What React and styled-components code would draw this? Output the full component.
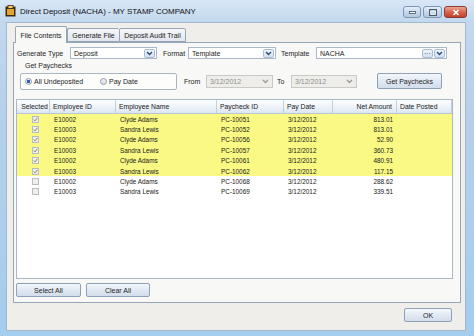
import React from 'react';
import styled, { createGlobalStyle } from 'styled-components';

const GlobalStyle = createGlobalStyle`
  html, body { margin: 0; padding: 0; overflow: hidden; background: #9fcbec; }
  body { font-family: "Liberation Sans", Arial, sans-serif; color: #1b1b1b; }
  * { box-sizing: border-box; }
`;

const rows = [
  { id: 'E10002', name: 'Clyde Adams', check: 'PC-10051', amount: '813.01', sel: true },
  { id: 'E10003', name: 'Sandra Lewis', check: 'PC-10052', amount: '813.01', sel: true },
  { id: 'E10002', name: 'Clyde Adams', check: 'PC-10056', amount: '52.90', sel: true },
  { id: 'E10003', name: 'Sandra Lewis', check: 'PC-10057', amount: '360.73', sel: true },
  { id: 'E10002', name: 'Clyde Adams', check: 'PC-10061', amount: '480.91', sel: true },
  { id: 'E10003', name: 'Sandra Lewis', check: 'PC-10062', amount: '117.15', sel: true },
  { id: 'E10002', name: 'Clyde Adams', check: 'PC-10068', amount: '288.62', sel: false },
  { id: 'E10003', name: 'Sandra Lewis', check: 'PC-10069', amount: '339.51', sel: false },
];

const columns = '33px 66px 101px 67px 49px 64px 55px';

// * Window frame
const Window = styled.div`
  width: 474px;
  height: 336px;
  display: flex;
  flex-direction: column;
  padding: 0 8px 5px 6px;
  background: linear-gradient(to bottom, #d9e7f6 0px, #c2d8ee 22px, #b5d0eb 120px, #a4cdee 100%);
`;

const TitleBar = styled.div`
  height: 22px;
  display: flex;
  align-items: center;
  margin-left: -1px;
`;

const Title = styled.div`
  flex: 1;
  font-size: 8px;
  color: #111;
  padding-left: 4px;
  padding-top: 1px;
  white-space: nowrap;
`;

const Controls = styled.div`
  display: flex;
  gap: 2px;
  align-self: flex-start;
  margin-top: 6px;
  margin-right: -1px;
`;

const CtrlButton = styled.div`
  width: ${p => p.$w}px;
  height: 12px;
  border-radius: 3px;
  border: 1px solid ${p => (p.$close ? '#8c3b2f' : '#7f96b2')};
  background: ${p =>
    p.$close
      ? 'linear-gradient(to bottom, #eaa797, #d5644d 50%, #c3412c)'
      : 'linear-gradient(to bottom, #e6eff9, #c8d9ec 50%, #b3c9e2)'};
  display: flex;
  align-items: center;
  justify-content: center;
`;

const Client = styled.div`
  flex: 1;
  display: flex;
  flex-direction: column;
  background: #efeeea;
  border: 1px solid #a3b8cd;
  padding: 3px 4px 0 6px;
`;

// * Tabs
const TabStrip = styled.div`
  display: flex;
  align-items: flex-end;
  height: 16px;
  margin-left: 2px;
  position: relative;
  z-index: 1;
`;

const Tab = styled.div`
  width: ${p => p.$w}px;
  height: ${p => (p.$active ? 17 : 14)}px;
  margin-bottom: ${p => (p.$active ? -1 : 0)}px;
  font-size: 7px;
  display: flex;
  align-items: center;
  justify-content: center;
  border: 1px solid #95a6b9;
  border-bottom: ${p => (p.$active ? 'none' : '1px solid #95a6b9')};
  border-right: ${p => (p.$last || p.$active ? '1px solid #95a6b9' : 'none')};
  background: ${p => (p.$active ? '#f8f8f6' : 'linear-gradient(to bottom, #f6f7f9, #e2e6ec)')};
  border-radius: 2px 2px 0 0;
`;

const Panel = styled.div`
  border: 1px solid #95a6b9;
  background: #f8f8f6;
  padding: 4px 7px 5px 2px;
  display: flex;
  flex-direction: column;
`;

// * Form rows
const Row = styled.div`
  display: flex;
  align-items: center;
  height: ${p => p.$h}px;
  padding-left: ${p => p.$pl || 0}px;
  padding-right: ${p => p.$pr || 0}px;
  margin-top: ${p => p.$mt || 0}px;
`;

const Label = styled.div`
  font-size: 7px;
  width: ${p => (p.$w ? `${p.$w}px` : 'auto')};
  padding-left: ${p => p.$pl || 0}px;
  flex-shrink: 0;
  white-space: nowrap;
  color: #1e1e1e;
`;

const Field = styled.div`
  width: ${p => (p.$w ? `${p.$w}px` : 'auto')};
  flex: ${p => (p.$w ? '0 0 auto' : '1')};
  height: ${p => p.$h || 12}px;
  display: flex;
  align-items: center;
  border: 1px solid ${p => (p.$disabled ? '#c9c9c6' : '#abb8c7')};
  background: ${p => (p.$disabled ? '#eeede9' : '#ffffff')};
  padding: 0 1px 0 3px;
  font-size: 7px;
  color: ${p => (p.$disabled ? '#8d8d8d' : '#1e1e1e')};
`;

const FieldText = styled.span`
  flex: 1;
  white-space: nowrap;
`;

const DropButton = styled.div`
  width: 11px;
  height: 9px;
  margin-left: 1px;
  border-radius: 2px;
  display: flex;
  align-items: center;
  justify-content: center;
  border: 1px solid ${p => (p.$plain ? 'transparent' : '#a9bcd3')};
  background: ${p => (p.$plain ? 'transparent' : 'linear-gradient(to bottom, #eef4fb, #d3e1f1)')};
  font-size: 7px;
  line-height: 1;
  color: #334;
`;

const GroupBox = styled.div`
  width: 157px;
  height: 17px;
  border: 1px solid #abb6c3;
  border-radius: 2px;
  background: #fdfdfc;
  display: flex;
  align-items: center;
  padding-left: 4px;
`;

const Radio = styled.div`
  display: flex;
  align-items: center;
  gap: 2px;
  font-size: 7px;
  width: ${p => p.$w}px;
  white-space: nowrap;
`;

const RadioDot = styled.span`
  width: 7px;
  height: 7px;
  border-radius: 50%;
  border: 1px solid #8e9caf;
  background: ${p =>
    p.$on
      ? 'radial-gradient(circle, #2d62b8 0 1.6px, #e9eef5 2px)'
      : 'linear-gradient(to bottom, #eef1f5, #d9dee6)'};
`;

const Button = styled.div`
  width: ${p => p.$w}px;
  height: ${p => p.$h || 14}px;
  margin-left: ${p => p.$ml || 0}px;
  border: 1px solid #8fa1b6;
  border-radius: 2px;
  background: linear-gradient(to bottom, #f3f7fc, #e1e9f3 50%, #d2deeb);
  display: flex;
  align-items: center;
  justify-content: center;
  font-size: 7px;
  color: #1e1e1e;
  flex-shrink: 0;
`;

// * Grid
const Grid = styled.div`
  margin-top: 9px;
  height: 180px;
  border: 1px solid #a9b7c7;
  background: #ffffff;
`;

const GridRow = styled.div`
  display: grid;
  grid-template-columns: ${columns};
  height: ${p => (p.$header ? 14 : 10.4)}px;
  background: ${p => (p.$header ? 'linear-gradient(to bottom, #fdfeff, #eef3f9 55%, #dde6f1)' : p.$sel ? '#f9f983' : '#ffffff')};
  border-bottom: ${p => (p.$header ? '1px solid #b8c6d6' : 'none')};
`;

const Cell = styled.div`
  font-size: ${p => (p.$header ? 6.8 : 6.4)}px;
  display: flex;
  align-items: center;
  justify-content: ${p => (p.$align === 'right' ? 'flex-end' : p.$align === 'center' ? 'center' : 'flex-start')};
  padding: 0 ${p => (p.$align === 'right' ? 4 : 0)}px 0 ${p => (p.$align === 'right' ? 0 : p.$header ? 3 : 4)}px;
  border-right: ${p => (p.$header ? '1px solid #c3cfdc' : 'none')};
  white-space: nowrap;
  overflow: hidden;
  color: #202020;
`;

const Footer = styled.div`
  display: flex;
  justify-content: flex-end;
  padding: 5px 9px 0 0;
`;

const Chevron = ({ color = '#2b4a7a' }) => (
  <svg width="7" height="5" viewBox="0 0 7 5">
    <path d="M1 1 L3.5 3.5 L6 1" fill="none" stroke={color} strokeWidth="1.4" />
  </svg>
);

const CheckBox = ({ checked }) => (
  <svg width="7" height="7" viewBox="0 0 7 7">
    <rect x="0.5" y="0.5" width="6" height="6" fill="#eeeeec" stroke="#b9bec4" />
    {checked && <path d="M1.8 3.6 L3 4.9 L5.3 1.8" fill="none" stroke="#7f8a78" strokeWidth="1" />}
  </svg>
);

const AppIcon = () => (
  <svg width="11" height="12" viewBox="0 0 11 12">
    <rect x="0.5" y="1.5" width="10" height="10" fill="#3b2a17" />
    <rect x="2" y="4" width="7" height="6" fill="#e2a42a" />
    <rect x="3" y="0.5" width="5" height="3" fill="#f4d25a" stroke="#3b2a17" strokeWidth="0.8" />
  </svg>
);

const Select = ({ w, value }) => (
  <Field $w={w}>
    <FieldText>{value}</FieldText>
    <DropButton><Chevron /></DropButton>
  </Field>
);

const DateBox = ({ w }) => (
  <Field $w={w} $h={13} $disabled>
    <FieldText>3/12/2012</FieldText>
    <DropButton $plain><Chevron color="#9a9a9a" /></DropButton>
  </Field>
);

const App = () => {
  return (
    <Window>
      <GlobalStyle />
      <TitleBar>
        <AppIcon />
        <Title>Direct Deposit (NACHA) - MY STAMP COMPANY</Title>
        <Controls>
          <CtrlButton $w={18}>
            <svg width="7" height="3" viewBox="0 0 7 3"><rect x="0.5" y="0.5" width="6" height="2" fill="#fff" stroke="#3c4e66" strokeWidth="0.8" /></svg>
          </CtrlButton>
          <CtrlButton $w={19}>
            <svg width="8" height="7" viewBox="0 0 8 7"><rect x="0.7" y="0.7" width="6.6" height="5.6" fill="none" stroke="#3c4e66" strokeWidth="1.2" /><rect x="1.7" y="2" width="4.6" height="3.3" fill="none" stroke="#fff" strokeWidth="0.8" /></svg>
          </CtrlButton>
          <CtrlButton $w={23} $close>
            <svg width="8" height="7" viewBox="0 0 8 7"><path d="M1.5 1 L6.5 6 M6.5 1 L1.5 6" stroke="#fff" strokeWidth="1.6" /></svg>
          </CtrlButton>
        </Controls>
      </TitleBar>

      <Client>
        <TabStrip>
          <Tab $w={52} $active>File Contents</Tab>
          <Tab $w={52}>Generate File</Tab>
          <Tab $w={67} $last>Deposit Audit Trail</Tab>
        </TabStrip>

        <Panel>
          <Row $h={12} $pl={1} $pr={6}>
            <Label $w={53}>Generate Type</Label>
            <Select w={87} value="Deposit" />
            <Label $w={31} $pl={6}>Format</Label>
            <Select w={88} value="Template" />
            <Label $w={40} $pl={5}>Template</Label>
            <Field>
              <FieldText>NACHA</FieldText>
              <DropButton>···</DropButton>
              <DropButton><Chevron /></DropButton>
            </Field>
          </Row>

          <Row $h={10} $pl={9} $mt={1}>
            <Label>Get Paychecks</Label>
          </Row>

          <Row $h={18} $pl={4} $mt={2}>
            <GroupBox>
              <Radio $w={75}><RadioDot $on />All Undeposited</Radio>
              <Radio $w={60}><RadioDot />Pay Date</Radio>
            </GroupBox>
            <Label $w={29} $pl={7}>From</Label>
            <DateBox w={67} />
            <Label $w={18} $pl={4}>To</Label>
            <DateBox w={66} />
            <Button $w={65} $h={16} $ml={20}>Get Paychecks</Button>
          </Row>

          <Grid>
            <GridRow $header>
              <Cell $header $align="center">Selected</Cell>
              <Cell $header>Employee ID</Cell>
              <Cell $header>Employee Name</Cell>
              <Cell $header>Paycheck ID</Cell>
              <Cell $header>Pay Date</Cell>
              <Cell $header $align="right">Net Amount</Cell>
              <Cell $header>Date Posted</Cell>
            </GridRow>
            {rows.map(r => (
              <GridRow key={r.check} $sel={r.sel}>
                <Cell $align="center"><CheckBox checked={r.sel} /></Cell>
                <Cell>{r.id}</Cell>
                <Cell>{r.name}</Cell>
                <Cell>{r.check}</Cell>
                <Cell>3/12/2012</Cell>
                <Cell $align="right">{r.amount}</Cell>
                <Cell />
              </GridRow>
            ))}
          </Grid>

          <Row $h={14} $mt={4}>
            <Button $w={65}>Select All</Button>
            <Button $w={64} $ml={5}>Clear All</Button>
          </Row>
        </Panel>

        <Footer>
          <Button $w={48}>OK</Button>
        </Footer>
      </Client>
    </Window>
  );
};

export default App;
